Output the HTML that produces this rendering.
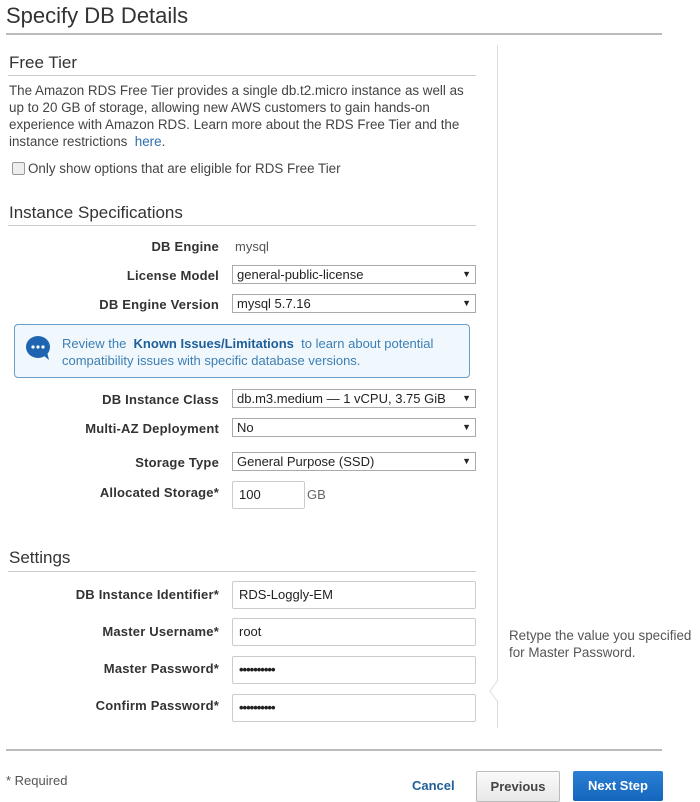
<!DOCTYPE html>
<html><head><meta charset="utf-8"><style>
body{margin:0;width:700px;height:802px;background:#fff;font-family:"Liberation Sans",Arial,sans-serif;color:#444;position:relative;overflow:hidden}
.a{position:absolute;white-space:nowrap}
.h{font-size:17px;color:#333}
.rule{position:absolute;height:1px;background:#ccc}
.lbl{position:absolute;right:481px;font-size:13px;font-weight:bold;color:#333;white-space:nowrap;letter-spacing:0.2px}
.sel{position:absolute;left:232px;font-size:13px;color:#222;line-height:17px;padding-left:4px;box-sizing:border-box;width:244px;height:19px;background:#fff;border:1px solid #aaa;overflow:hidden}
.sel:after{content:"▼";position:absolute;right:4px;top:0;font-size:9px;background:#fff;padding-left:2px}
.inp{position:absolute;left:232px;width:244px;height:28px;border:1px solid #ccc;box-sizing:border-box;font-size:13px;color:#222;line-height:26px;padding-left:6px;border-radius:2px}
</style></head><body>
<div class="a" style="left:6px;top:3px;font-size:22px;color:#333">Specify DB Details</div>
<div class="rule" style="left:6px;top:33px;width:656px;height:2px;background:#bbb"></div>
<div style="position:absolute;left:497px;top:45px;width:1px;height:683px;background:#ddd"></div>
<div class="a h" style="left:9px;top:53px">Free Tier</div>
<div class="rule" style="left:8px;top:75px;width:468px"></div>
<div class="a" style="left:9px;top:82px;font-size:13.4px;line-height:17px;color:#444">The Amazon RDS Free Tier provides a single db.t2.micro instance as well as<br>up to 20 GB of storage, allowing new AWS customers to gain hands-on<br>experience with Amazon RDS. Learn more about the RDS Free Tier and the<br>instance restrictions &nbsp;<span style="color:#2a6ead">here</span>.</div>
<div class="a" style="left:12px;top:162px;width:11px;height:11px;border:1px solid #999;border-radius:2px;background:#eee"></div>
<div class="a" style="left:28px;top:161px;font-size:13.4px">Only show options that are eligible for RDS Free Tier</div>
<div class="a h" style="left:9px;top:203px">Instance Specifications</div>
<div class="rule" style="left:8px;top:225px;width:468px"></div>
<div class="lbl" style="top:239px">DB Engine</div><div class="a" style="left:235px;top:239px;font-size:13px;color:#555">mysql</div>
<div class="lbl" style="top:268px">License Model</div><div class="sel" style="top:265px">general-public-license</div>
<div class="lbl" style="top:297px">DB Engine Version</div><div class="sel" style="top:294px">mysql 5.7.16</div>
<div style="position:absolute;left:14px;top:324px;width:454px;height:52px;border:1px solid #6a9ec6;border-radius:4px;background:#f0f7fd"></div>
<svg style="position:absolute;left:25px;top:335px" width="28" height="26"><ellipse cx="13" cy="12" rx="12" ry="11" fill="#1f64b0"/><path d="M18 20 L24 25 L22 17Z" fill="#1f64b0"/><circle cx="8" cy="12" r="1.6" fill="#fff"/><circle cx="13" cy="12" r="1.6" fill="#fff"/><circle cx="18" cy="12" r="1.6" fill="#fff"/></svg>
<div class="a" style="left:62px;top:335px;font-size:13px;line-height:17px;color:#3d7fb3">Review the &nbsp;<b style="color:#1f5f99">Known Issues/Limitations</b>&nbsp; to learn about potential<br>compatibility issues with specific database versions.</div>
<div class="lbl" style="top:392px">DB Instance Class</div><div class="sel" style="top:389px">db.m3.medium — 1 vCPU, 3.75 GiB RAM</div>
<div class="lbl" style="top:421px">Multi-AZ Deployment</div><div class="sel" style="top:418px">No</div>
<div class="lbl" style="top:455px">Storage Type</div><div class="sel" style="top:452px">General Purpose (SSD)</div>
<div class="lbl" style="top:485px">Allocated Storage*</div><div class="inp" style="top:481px;width:73px;height:28px">100</div>
<div class="a" style="left:307px;top:487px;font-size:13px;color:#666">GB</div>
<div class="a h" style="left:9px;top:548px">Settings</div>
<div class="rule" style="left:8px;top:571px;width:468px"></div>
<div class="lbl" style="top:587px">DB Instance Identifier*</div><div class="inp" style="top:581px">RDS-Loggly-EM</div>
<div class="lbl" style="top:624px">Master Username*</div><div class="inp" style="top:618px">root</div>
<div class="lbl" style="top:661px">Master Password*</div><div class="inp" style="top:656px;font-weight:bold;letter-spacing:-1px">••••••••••</div>
<div class="lbl" style="top:698px">Confirm Password*</div><div class="inp" style="top:694px;font-weight:bold;letter-spacing:-1px">••••••••••</div>
<div class="a" style="left:509px;top:627px;font-size:13.4px;line-height:17px;color:#555">Retype the value you specified<br>for Master Password.</div>
<svg style="position:absolute;left:489px;top:680px" width="10" height="22"><path d="M9 0 L1 11 L9 22" fill="#fff" stroke="#ddd"/></svg>
<div class="rule" style="left:6px;top:749px;width:656px;height:2px;background:#bbb"></div>
<div class="a" style="left:6px;top:773px;font-size:13px;color:#555">* Required</div>
<div class="a" style="left:412px;top:778px;font-size:13px;font-weight:bold;color:#1f5f99">Cancel</div>
<div class="a" style="left:476px;top:771px;width:82px;height:29px;border:1px solid #bbb;border-radius:2px;background:linear-gradient(#fafafa,#e8e8e8);font-size:13px;font-weight:bold;color:#444;text-align:center;line-height:29px">Previous</div>
<div class="a" style="left:573px;top:771px;width:90px;height:30px;border-radius:2px;background:linear-gradient(#2a7fd4,#1565bd);font-size:13px;font-weight:bold;color:#fff;text-align:center;line-height:30px">Next Step</div>
</body></html>
